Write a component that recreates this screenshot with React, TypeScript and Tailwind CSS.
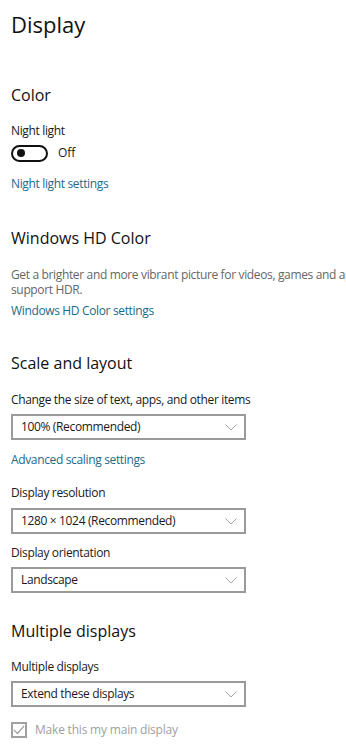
const font = { fontFamily: '"Open Sans", "Noto Sans", sans-serif' };

function Dropdown({ value }: { value: string }) {
  return (
    <div className="flex h-[26px] w-[235px] items-center justify-between border-2 border-[#9a9a9a] bg-white pl-[8px] pr-[7px]">
      <span className="text-[12px] tracking-[-0.35px] text-[#1a1a1a]">{value}</span>
      <svg width="12" height="7" viewBox="0 0 12 7" fill="none">
        <path d="M0.5 0.5 L6 6 L11.5 0.5" stroke="#a5a5a5" strokeWidth="1" />
      </svg>
    </div>
  );
}

function Link({ children }: { children: React.ReactNode }) {
  return <div className="text-[12px] leading-[16px] tracking-[-0.35px] text-[#1b6a8c]">{children}</div>;
}

function Label({ children }: { children: React.ReactNode }) {
  return <div className="text-[12px] leading-[16px] tracking-[-0.35px] text-[#1a1a1a]">{children}</div>;
}

function Heading({ children }: { children: React.ReactNode }) {
  return <h2 className="text-[16px] leading-[20px] text-[#111]">{children}</h2>;
}

export default function App() {
  return (
    <div className="h-[750px] w-[346px] overflow-hidden bg-white pl-[11px]" style={font}>
      <h1 className="pt-[9px] text-[22px] leading-[30px] text-[#111]">Display</h1>

      {/* Color */}
      <div className="mt-[46px]">
        <Heading>Color</Heading>
        <div className="mt-[18px]">
          <Label>Night light</Label>
        </div>
        <div className="mt-[5px] flex items-center gap-[10px]">
          <div className="flex h-[17px] w-[37px] items-center rounded-full border-2 border-[#111] pl-[4px]">
            <div className="h-[8px] w-[8px] rounded-full bg-[#111]" />
          </div>
          <span className="text-[12px] text-[#1a1a1a]">Off</span>
        </div>
        <div className="mt-[14px]">
          <Link>Night light settings</Link>
        </div>
      </div>

      {/* HD color */}
      <div className="mt-[36px]">
        <Heading>Windows HD Color</Heading>
        <div className="mt-[19px] whitespace-nowrap text-[12px] tracking-[-0.35px] text-[#666]">
          <p className="leading-[15px]">Get a brighter and more vibrant picture for videos, games and apps that</p>
          <p className="leading-[15px]">support HDR.</p>
        </div>
        <div className="mt-[6px]">
          <Link>Windows HD Color settings</Link>
        </div>
      </div>

      {/* Scale and layout */}
      <div className="mt-[34px]">
        <Heading>Scale and layout</Heading>
        <div className="mt-[19px]">
          <Label>Change the size of text, apps, and other items</Label>
        </div>
        <div className="mt-[6px]">
          <Dropdown value="100% (Recommended)" />
        </div>
        <div className="mt-[12px]">
          <Link>Advanced scaling settings</Link>
        </div>
        <div className="mt-[17px]">
          <Label>Display resolution</Label>
        </div>
        <div className="mt-[7px]">
          <Dropdown value="1280 × 1024 (Recommended)" />
        </div>
        <div className="mt-[11px]">
          <Label>Display orientation</Label>
        </div>
        <div className="mt-[6px]">
          <Dropdown value="Landscape" />
        </div>
      </div>

      {/* Multiple displays */}
      <div className="mt-[28px]">
        <Heading>Multiple displays</Heading>
        <div className="mt-[18px]">
          <Label>Multiple displays</Label>
        </div>
        <div className="mt-[6px]">
          <Dropdown value="Extend these displays" />
        </div>
        <div className="mt-[14px] flex items-center gap-[8px]">
          <div className="flex h-[16px] w-[16px] items-center justify-center border-2 border-[#a0a0a0]">
            <svg width="12" height="10" viewBox="0 0 12 10" fill="none">
              <path d="M1 5 L4.5 8.5 L11 1" stroke="#a0a0a0" strokeWidth="1.2" />
            </svg>
          </div>
          <span className="text-[12px] tracking-[-0.2px] text-[#a0a0a0]">Make this my main display</span>
        </div>
      </div>
    </div>
  );
}
